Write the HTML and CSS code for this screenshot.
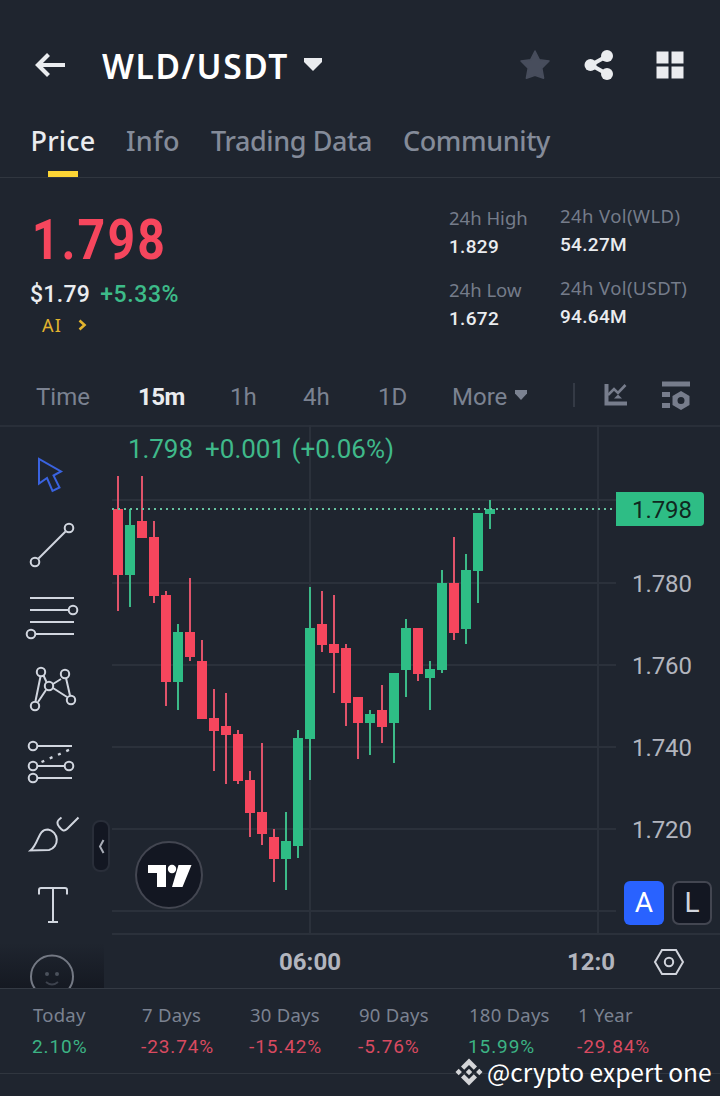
FILE: index.html
```html
<!DOCTYPE html>
<html lang="en">
<head>
<meta charset="utf-8">
<title>WLD/USDT</title>
<link rel="stylesheet" href="styles.css">
</head>
<body>
<div class="app">
  <header class="header">
    <svg class="back" width="32" height="26" viewBox="0 0 32 26"><path d="M31 13H4M14.500 2.500L4 13l10.500 10.500"/></svg>
    <h1 class="pair">WLD/USDT</h1>
    <svg class="caret" width="20" height="16" viewBox="0 0 20 16"><path d="M1 1h18v4l-9 9-9-9z"/></svg>
    <svg class="star" width="32" height="32" viewBox="0 0 32 32"><path d="M16 2l4.300 8.700 9.700 1.300-7.200 7.200 1.800 10L16 26.200 7.400 29.200l1.800-10L2 12l9.700-1.300z"/></svg>
    <svg class="share" width="30" height="32" viewBox="0 0 30 32"><path d="M23 7L7 16l16 9"/><circle cx="6.500" cy="16" r="6"/><circle cx="23" cy="7" r="6"/><circle cx="23" cy="25" r="6"/></svg>
    <svg class="grid-icon" width="28" height="28" viewBox="0 0 28 28"><path d="M.500.500h12v12H.500zM15.500.500h12v12h-12zM.500 15.500h12v12H.500zM15.500 15.500h12v12h-12z"/></svg>
  </header>

  <nav class="tabs">
    <a class="tab tab-price">Price</a>
    <a class="tab tab-info">Info</a>
    <a class="tab tab-data">Trading Data</a>
    <a class="tab tab-community">Community</a>
  </nav>

  <section class="summary">
    <div class="quote">
      <div class="last">1.798</div>
      <div class="fiat"><span class="usd">$1.79</span><span class="change">+5.33%</span></div>
      <div class="tag">AI<svg width="9" height="12" viewBox="0 0 9 12"><path d="M1.500 1.500L6.500 6l-5 4.500"/></svg></div>
    </div>
    <dl class="stats stats-range">
      <dt>24h High</dt><dd>1.829</dd>
      <dt>24h Low</dt><dd>1.672</dd>
    </dl>
    <dl class="stats stats-volume">
      <dt>24h Vol(WLD)</dt><dd>54.27M</dd>
      <dt>24h Vol(USDT)</dt><dd>94.64M</dd>
    </dl>
  </section>

  <nav class="intervals">
    <span class="iv iv-time">Time</span>
    <span class="iv iv-15m">15m</span>
    <span class="iv iv-1h">1h</span>
    <span class="iv iv-4h">4h</span>
    <span class="iv iv-1d">1D</span>
    <span class="iv iv-more">More</span>
    <svg class="more-caret" width="14" height="12" viewBox="0 0 14 12"><path d="M1 1h12v3.500L7 11 1 4.500z"/></svg>
    <span class="divider"></span>
    <svg class="indicator" width="24" height="24" viewBox="0 0 24 24"><path d="M2.500 1v19.500H23" stroke-width="4"/><path d="M4 12l6-6 4 4 7.500-8" stroke-width="2.600"/><path class="solid" d="M10 15.500l4-4 4 4z"/></svg>
    <svg class="settings" width="30" height="30" viewBox="0 0 30 30"><path d="M1 .500h28v5H1zM1 11h8v5H1zM1 22h8v5H1z"/><path fill-rule="evenodd" d="M20 10l8.500 5v9L20 29l-8.500-5v-9zm0 6a3.500 3.500 0 1 0 0 7 3.500 3.500 0 0 0 0-7z"/></svg>
  </nav>

  <main class="chart">
    <aside class="tools">
      <svg class="tool cursor" viewBox="0 437 104 72"><path d="M39 459v24.500l8-5.500 5.500 13 7-3.500-6-12 7.500-4z"/></svg>
      <svg class="tool" viewBox="0 509 104 72"><path d="M38.500 558.500l27-27"/><circle cx="35" cy="562" r="4.300"/><circle cx="69" cy="528" r="4.300"/></svg>
      <svg class="tool" viewBox="0 581 104 72"><path d="M30 598h44M30 610h38M30 622h44M36 634h38"/><circle cx="73" cy="610" r="4.300"/><circle cx="31" cy="634" r="4.300"/></svg>
      <svg class="tool" viewBox="0 653 104 72"><path d="M40.500 676.500L35.500 701M43.500 675.500l3 6.500M38 702l8-12M53 684l8-5M66 678l4 17.500M53 688l14 9"/><circle cx="41" cy="672" r="4.200"/><circle cx="65" cy="674" r="4.200"/><circle cx="49" cy="686" r="4.200"/><circle cx="35" cy="706" r="4.200"/><circle cx="71" cy="700" r="4.200"/></svg>
      <svg class="tool" viewBox="0 725 104 72"><path d="M38 746h34M38 766h26M38 778h34"/><path class="dots" d="M41.500 762L70 749.500"/><circle cx="33" cy="746" r="4.300"/><circle cx="33" cy="766" r="4.300"/><circle cx="69" cy="766" r="4.300"/><circle cx="33" cy="778" r="4.300"/></svg>
      <svg class="tool" viewBox="0 797 104 72"><path d="M30.500 850.500c9-8 7-21 17.500-21a10.500 10.500 0 0 1 1 20.500zM61.500 817.500c-6 4-4 7-2.500 9 2 2.500 4.500 6 8 2.500l11.500-11.500"/></svg>
      <svg class="tool" viewBox="0 869 104 72"><path d="M39 894.500v-4.500q0-2 2-2h24q2 0 2 2v4.500M53 888v34M48 922h10"/></svg>
      <svg class="tool smile" viewBox="0 941 104 47"><circle cx="52" cy="976.500" r="21"/><path d="M46 982q6 5 12 0"/><circle class="eye" cx="47" cy="974" r="2"/><circle class="eye" cx="57" cy="974" r="2"/></svg>
      <button class="collapse"><svg width="7" height="15" viewBox="0 0 7 15"><path d="M5.500 1L2 7.500 5.500 14"/></svg></button>
    </aside>
    <svg class="plot" width="616" height="561" viewBox="104 427 616 561">
      <path class="gridline" d="M112 500H616M112 583H616M112 665H616M112 747H616M112 829H616M112 911H616M112 934H720M310 425V934M598 425V934"/>
      <path class="wick down" d="M118 476V611M142 476V538M154 521V603M166 591V706M190 578V661M202 640V719M214 689V771M226 693V784M238 730V784M250 771V837M262 743V845M274 829V882M322 591V652M334 595V693M346 644V726M358 697V759M382 685V743M418 628V681M454 537V640"/>
      <path class="wick up" d="M130 509V607M178 624V710M286 812V890M298 730V858M310 587V780M370 710V755M394 673V763M406 619V697M430 661V710M442 570V673M466 554V644M478 513V603M490 500V529"/>
      <path class="body down" d="M118 509V575M142 521V538M154 537V596M166 595V682M190 632V657M202 661V719M214 718V731M226 726V735M238 734V781M250 780V813M262 812V834M274 837V859M322 624V645M334 644V653M346 648V703M358 697V723M382 710V727M418 628V674M454 583V633"/>
      <path class="body up" d="M130 525V575M178 632V682M286 841V859M298 738V846M310 628V739M370 714V723M394 673V723M406 628V670M430 669V678M442 583V670M466 570V629M478 513V571M490 509V514"/>
      <path class="price-line" d="M112 509H616"/>
      <text class="legend" x="128" y="458" textLength="65">1.798</text>
      <text class="legend" x="205" y="458" textLength="189">+0.001 (+0.06%)</text>
      <path class="price-tag" d="M616 492h84q4 0 4 4v26q0 4-4 4h-84z"/>
      <text class="price-now" x="632" y="518" textLength="60">1.798</text>
      <g class="axis">
        <text x="632" y="592" textLength="60">1.780</text>
        <text x="632" y="674" textLength="60">1.760</text>
        <text x="632" y="756" textLength="60">1.740</text>
        <text x="632" y="838" textLength="60">1.720</text>
      </g>
      <g class="times">
        <text x="279" y="970" textLength="62">06:00</text>
        <text x="567" y="970" textLength="48">12:0</text>
      </g>
      <circle class="tv-ring" cx="169" cy="875" r="33"/>
      <path class="tv-mark" d="M148 865h18v22h-9v-14h-9zM178.500 865H191.500l-9 22H172z"/><circle class="tv-mark" cx="172" cy="869" r="4.200"/>
      <rect class="auto" x="624" y="881" width="40" height="44" rx="6"/>
      <text class="auto-label" x="644" y="912">A</text>
      <rect class="log" x="673" y="882" width="38" height="42" rx="6"/>
      <text class="log-label" x="692" y="912">L</text>
      <path class="hex" d="M662 950h14l7 12-7 12h-14l-7-12z"/><circle class="hex" cx="669" cy="962" r="4.200"/>
    </svg>
  </main>

  <section class="periods">
    <div class="period p1"><span>Today</span><b class="gain">2.10%</b></div>
    <div class="period p2"><span>7 Days</span><b>-23.74%</b></div>
    <div class="period p3"><span>30 Days</span><b>-15.42%</b></div>
    <div class="period p4"><span>90 Days</span><b>-5.76%</b></div>
    <div class="period p5"><span>180 Days</span><b class="gain">15.99%</b></div>
    <div class="period p6"><span>1 Year</span><b>-29.84%</b></div>
  </section>
  <div class="watermark">
    <svg width="28" height="28" viewBox="0 0 28 28"><path d="M14 .500L22 8.500l-3.200 3.200L14 6.900l-4.800 4.800L6 8.500zM14 27.500l8-8-3.200-3.200L14 21.100l-4.800-4.800L6 19.500zM14 10.800l3.200 3.200-3.200 3.200-3.200-3.200zM3.700 10.800L6.900 14l-3.200 3.200L.500 14zM24.300 10.800l3.200 3.200-3.200 3.200-3.200-3.200z"/></svg>
    <span>@crypto expert one</span>
  </div>
</div>
</body>
</html>
```
FILE: styles.css
```css
* { box-sizing: border-box; margin: 0; padding: 0; }
body { background: #1f252f; color: #eaecef; font-family: Roboto, "Liberation Sans", sans-serif; }
svg { display: block; flex: none; }
.app { position: relative; width: 720px; height: 1096px; overflow: hidden; display: flex; flex-direction: column; white-space: nowrap; }

.header { height: 110px; padding: 20px 36px 0 34px; display: flex; align-items: center; }
.back { fill: none; stroke: #eaecef; stroke-width: 4.200; }
.pair { width: 186px; margin-left: 36px; padding-top: 2px; font: 600 33.500px/44px "Noto Sans", sans-serif; letter-spacing: 1.600px; color: #fff; }
.caret { margin-left: 15px; fill: #eaecef; }
.star { margin-left: 196px; fill: #474d5c; stroke: #474d5c; stroke-width: 1.500; stroke-linejoin: round; }
.share { margin-left: 33px; fill: #eaecef; }
.share path { fill: none; stroke: #eaecef; stroke-width: 4; }
.grid-icon { margin-left: 42px; fill: #eaecef; }

.tabs { height: 68px; border-bottom: 1px solid #30363f; padding-left: 31px; display: flex; gap: 31px; font: 500 27px/62px "Noto Sans", sans-serif; color: #848b99; }
.tab-price { width: 64px; color: #eaecef; display: flex; flex-direction: column; align-items: center; letter-spacing: .2px; }
.tab-price::after { content: ""; width: 30px; height: 6px; margin-top: -1px; background: #fcd535; }
.tab-info { width: 54px; letter-spacing: .3px; }
.tab-data { width: 161px; letter-spacing: -.4px; }
.tab-community { letter-spacing: -.4px; }

.summary { height: 187px; padding: 26px 0 0 30px; display: flex; }
.quote { width: 419px; }
.last { width: 150px; height: 77px; padding-left: 2px; font-size: 56px; line-height: 72px; font-weight: 700; letter-spacing: 2.500px; color: #f6465d; transform: scaleX(.86); transform-origin: 0 0; }
.fiat { display: flex; gap: 11px; font-size: 23px; line-height: 28px; font-weight: 500; letter-spacing: .3px; }
.change { margin-left: -1px; letter-spacing: .6px; color: #3dbb89; }
.tag { padding: 2px 0 0 12px; display: flex; align-items: center; gap: 16px; font: 400 18px/28px "Noto Sans", sans-serif; letter-spacing: 1.200px; color: #e2b42e; }
.tag path { fill: none; stroke: #e2b42e; stroke-width: 2.600; }
.stats dt { height: 28px; font: 400 18.500px/28px "Noto Sans", sans-serif; color: #757c8a; }
.stats dd { height: 44px; padding-top: 1px; font-size: 19px; line-height: 28px; font-weight: 500; letter-spacing: .3px; color: #eaecef; }
.stats-range { width: 111px; }
.stats-volume { margin-top: -2px; }
.stats-volume dt { letter-spacing: .4px; }

.intervals { height: 62px; border-bottom: 2px solid #292f39; padding-left: 36px; display: flex; align-items: center; font-size: 24px; color: #7b8291; }
.iv { padding-top: 4px; }
.iv-time { width: 102px; }
.iv-15m { width: 92px; font-weight: 700; letter-spacing: -.5px; color: #eaecef; }
.iv-1h { width: 73px; }
.iv-4h { width: 75px; }
.iv-1d { width: 74px; }
.iv-more { width: 62px; }
.more-caret { fill: #7b8291; }
.divider { width: 2px; height: 24px; margin: 0 30px 0 45px; background: #343a45; }
.indicator { margin-left: -1px; fill: none; stroke: #777d8c; }
.indicator .solid { fill: #777d8c; stroke: none; }
.settings { margin-left: 33px; margin-top: 2px; fill: #777d8c; }

.chart { height: 561px; display: flex; }
.tools { position: relative; width: 104px; padding-top: 10px; background: linear-gradient(#1f252f 92%, #151922); display: flex; flex-direction: column; }
.tool { width: 104px; height: 72px; fill: none; stroke: #d1d6df; stroke-width: 2; }
.tool.cursor { stroke: #3a63e0; }
.tool.smile { height: 47px; stroke: #747984; }
.tool.smile .eye { fill: #4b515c; stroke: none; }
.tool.smile path { stroke: #3d424d; }
.tool .dots { stroke-width: 2.400; stroke-dasharray: 3 6; }
.collapse { position: absolute; left: 92px; top: 393px; width: 18px; height: 52px; border: 2px solid #292e39; border-radius: 8px; background: #131722; display: flex; align-items: center; justify-content: center; }
.collapse path { fill: none; stroke: #a9adb7; stroke-width: 2; }
.plot { overflow: visible; }
.gridline { fill: none; stroke: #2b313b; stroke-width: 2; }
.wick { stroke-width: 2; }
.body { stroke-width: 10; }
.wick.down { stroke: #e0536a; }
.wick.up { stroke: #3cba88; }
.body.down { stroke: #f6465d; }
.body.up { stroke: #2ebd85; }
.price-line { stroke: #66c3a0; stroke-width: 2; stroke-dasharray: 2 4; }
.legend { font-size: 26px; fill: #3fb98a; }
.price-tag { fill: #2ebd85; }
.price-now { font-size: 24px; fill: #10281f; }
.axis { font-size: 24px; fill: #b2b5be; }
.times { font-size: 24px; font-weight: 700; fill: #b2b5be; }
.tv-ring { fill: #131722; stroke: #434651; stroke-width: 2; }
.tv-mark { fill: #fff; }
.auto { fill: #2962ff; }
.auto-label { font-size: 28px; text-anchor: middle; fill: #fff; }
.log { fill: #131722; stroke: #434651; stroke-width: 2; }
.log-label { font-size: 28px; text-anchor: middle; fill: #d1d4dc; }
.hex { fill: none; stroke: #d1d4dc; stroke-width: 2; }

.periods { height: 86px; border-top: 1px solid #343a44; border-bottom: 1px solid #30363f; padding: 12px 0 0 32px; display: flex; }
.period { display: flex; flex-direction: column; }
.period span { height: 34px; font: 400 18.500px/28px "Noto Sans", sans-serif; letter-spacing: .25px; color: #7b8291; padding-left: 1px; }
.period b { font-size: 19px; line-height: 24px; font-weight: 400; letter-spacing: .9px; color: #d94a60; }
.period .gain { color: #3cb384; }
.p1 { width: 109px; }
.p2 { width: 108px; }
.p3 { width: 109px; }
.p4 { width: 110px; }
.p5 { width: 109px; }

.watermark { position: absolute; left: 455px; top: 1058px; height: 28px; display: flex; align-items: center; gap: 4px; font: 400 24.500px/28px "Noto Sans CJK SC", sans-serif; color: #fff; }
.watermark svg { fill: #d4d5d8; }
```
